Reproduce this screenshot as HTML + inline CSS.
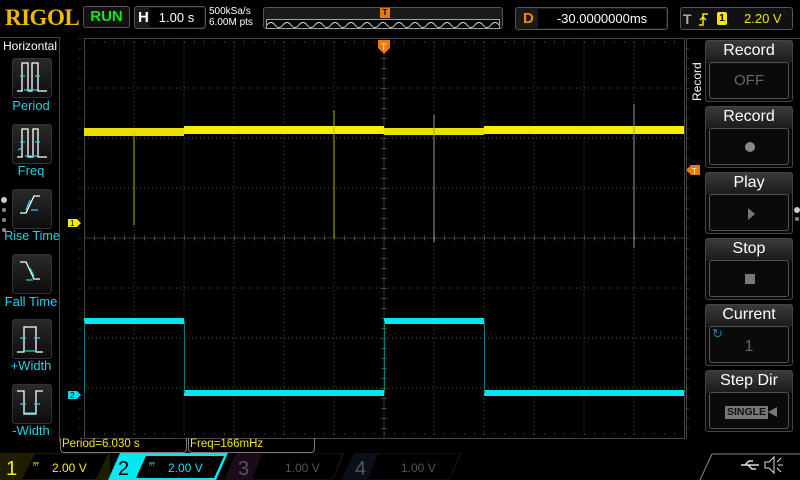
<!DOCTYPE html>
<html><head><meta charset="utf-8"><style>
*{margin:0;padding:0;box-sizing:border-box}
body{width:800px;height:480px;background:#000;overflow:hidden;position:relative;font-family:"Liberation Sans",sans-serif;color:#fff}
.a{position:absolute}
.btn{position:absolute;left:12px;width:40px;height:40px;border:1px solid #333;border-radius:3px;background:linear-gradient(#2a2a2a,#0c0c0c)}
.lbl{position:absolute;left:0;width:62px;text-align:center;color:#1fd3e8;font-size:13px}
.rb{position:absolute;left:705px;width:88px;height:62px;border:1px solid #444;border-radius:3px;background:linear-gradient(#3a3a3a,#1a1a1a 22px,#0a0a0a 22px)}
.rb .h{position:absolute;top:1px;width:100%;text-align:center;font-size:16px;color:#fff}
.rb .b{position:absolute;left:3px;top:21px;width:80px;height:37px;border:1px solid #555;border-radius:3px;background:#0a0a0a;text-align:center;color:#666}
</style></head><body>
<div class="a" style="left:5px;top:5px;font-family:'Liberation Serif',serif;font-weight:bold;font-size:23px;color:#f0b800;letter-spacing:-0.5px">RIGOL</div>
<div class="a" style="left:83px;top:6px;width:47px;height:22px;border:1px solid #555;border-radius:3px;background:#111;color:#17e81a;font-weight:bold;font-size:15px;text-align:center;line-height:20px">RUN</div>
<div class="a" style="left:134px;top:6px;width:72px;height:23px;border:1px solid #555;border-radius:3px;background:#1a1a1a"><span class="a" style="left:3px;top:2px;font-weight:bold;font-size:15px">H</span><div class="a" style="left:14px;top:1px;width:55px;height:19px;background:#000;border-radius:2px;font-size:13px;text-align:center;line-height:19px">1.00 s</div></div>
<div class="a" style="left:209px;top:6px;font-size:10px;line-height:11px">500kSa/s<br>6.00M pts</div>
<div class="a" style="left:263px;top:7px;width:240px;height:22px;border:1px solid #555;border-radius:3px;background:#1a1a1a"></div>
<div class="a" style="left:266px;top:19px;width:234px;height:10px;border:1px solid #8aa;background:#000"></div>
<svg class="a" style="left:267px;top:20px" width="232" height="8"><path d="M0 5 Q4 0 8 5 T16 5 T24 5 T32 5 T40 5 T48 5 T56 5 T64 5 T72 5 T80 5 T88 5 T96 5 T104 5 T112 5 T120 5 T128 5 T136 5 T144 5 T152 5 T160 5 T168 5 T176 5 T184 5 T192 5 T200 5 T208 5 T216 5 T224 5 T232 5" stroke="#ddd" fill="none"/></svg>
<div class="a" style="left:380px;top:8px;width:10px;height:10px;background:#f07800;color:#000;font-size:8px;text-align:center;line-height:10px;font-weight:bold">T</div>
<div class="a" style="left:515px;top:7px;width:153px;height:23px;border:1px solid #555;border-radius:3px;background:#1a1a1a"><span class="a" style="left:7px;top:2px;color:#f08a00;font-weight:bold;font-size:15px">D</span><div class="a" style="left:22px;top:1px;width:128px;height:19px;background:#000;font-size:13px;text-align:center;line-height:19px">-30.0000000ms</div></div>
<div class="a" style="left:680px;top:7px;width:113px;height:23px;border:1px solid #555;border-radius:3px;background:#111"><span class="a" style="left:2px;top:3px;color:#aaa;font-weight:bold;font-size:14px">T</span>
<svg class="a" style="left:16px;top:4px" width="14" height="15"><path d="M2 13H6V2H11M3 8L6 5L9 8" stroke="#f5e50a" fill="none" stroke-width="1.5"/></svg>
<div class="a" style="left:36px;top:4px;width:10px;height:13px;background:#f5e50a;border-radius:2px;color:#000;font-size:10px;text-align:center;line-height:13px;font-weight:bold">1</div><span class="a" style="left:63px;top:3px;color:#f5e50a;font-size:13px">2.20 V</span></div>
<div class="a" style="left:0;top:37px;width:60px;height:405px;border-top:1px solid #444;border-right:1px solid #444"></div>
<div class="a" style="left:3px;top:39px;font-size:12px">Horizontal</div>
<div class="btn" style="top:58px"></div><div class="lbl" style="top:98px">Period</div>
<div class="btn" style="top:124px"></div><div class="lbl" style="top:163px">Freq</div>
<div class="btn" style="top:189px"></div><div class="lbl" style="top:229px;left:1px;font-size:12.5px">Rise Time</div>
<div class="btn" style="top:254px"></div><div class="lbl" style="top:294px">Fall Time</div>
<div class="btn" style="top:319px"></div><div class="lbl" style="top:358px">+Width</div>
<div class="btn" style="top:384px"></div><div class="lbl" style="top:423px">-Width</div>
<svg class="a" style="left:0;top:0" width="60" height="440" fill="none" stroke-width="1.3">
<g stroke="#fff"><path d="M17 91H22V63H28V91H32V63H38V91H47"/><path d="M17 157H22V129H28V157H33V129H38V157H47"/><path d="M20 213H26L34 196H40"/><path d="M20 262H26L34 279H40"/><path d="M17 352H24V327H36V352H43"/><path d="M17 391H24V414H36V391H43"/></g>
<g stroke="#1fd3e8"><path d="M20 76H25M35 76H40M24 90H37"/><path d="M20 142H25M35 142H40M25 156H38M18 150L23 147"/><path d="M26 210L30 200M31 210H38"/><path d="M26 280H33M34 276L30 268"/><path d="M20 338H26M34 338H40M24 351H37"/><path d="M20 404H26M34 404H40M24 413H37"/></g>
<g fill="#888" stroke="none"><circle cx="4" cy="200" r="3" fill="#ccc"/><circle cx="4" cy="210" r="2"/><circle cx="4" cy="220" r="2"/><circle cx="4" cy="230" r="2"/></g>
</svg>
<svg class="a" style="left:0;top:0" width="800" height="480">
<rect x="84.5" y="38.5" width="600" height="400" fill="none" stroke="#444"/>
<g stroke="#555" stroke-dasharray="1 3">
<path d="M134 38V438M184 38V438M234 38V438M284 38V438M334 38V438M434 38V438M484 38V438M534 38V438M584 38V438M634 38V438"/>
<path d="M84 88H684M84 138H684M84 188H684M84 288H684M84 338H684M84 388H684"/>
</g>
<g stroke="#666">
<path d="M384 38V438M84 238H684" stroke-dasharray="1 9" stroke-width="5" stroke="#555"/>
<path d="M384 38V438M84 238H684" stroke="#333"/>
</g>
<g stroke="#666" stroke-dasharray="1 9"><path d="M84 434H684M84 42H684M80 38V438M688 38V438" stroke-width="1"/></g>
<rect x="84" y="128" width="100" height="8" fill="#e8e000"/>
<rect x="184" y="126" width="200" height="8" fill="#f5ee00"/>
<rect x="384" y="128" width="100" height="7" fill="#e8e000"/>
<rect x="484" y="126" width="200" height="8" fill="#f5ee00"/>
<path d="M134 134V225M334 110V238" stroke="#b8b000"/>
<path d="M434 115V242M634 104V248" stroke="#999"/>
<path d="M84 321H184M384 321H484" stroke="#00e8f0" stroke-width="6"/>
<path d="M184 393H384M484 393H684" stroke="#00e8f0" stroke-width="6"/>
<path d="M84.5 321V393M184.5 321V393M384.5 321V393M484.5 321V393" stroke="#0a7a80"/>
<path d="M68 219h9l4 4l-4 4h-9z" fill="#f5ee00"/><text x="70" y="226" font-size="8" fill="#000" font-family="Liberation Sans">1</text>
<path d="M68 391h9l4 4l-4 4h-9z" fill="#00e0f0"/><text x="70" y="398" font-size="8" fill="#000" font-family="Liberation Sans">2</text>
<path d="M378 40h12v8l-6 6l-6-6z" fill="#f07800"/><text x="381" y="50" font-size="9" fill="#fff" font-family="Liberation Sans">T</text>
<path d="M686 170l5-5h9v10h-9z" fill="#f07800"/><text x="692" y="174" font-size="8" fill="#fff" font-family="Liberation Sans">T</text>
</svg>
<div class="a" style="left:60px;top:438px;width:127px;height:15px;border:1px solid #777;border-top:none;border-radius:0 0 4px 4px;color:#f5e50a;font-size:11.5px;padding-left:1px;line-height:13px">Period=6.030 s</div>
<div class="a" style="left:188px;top:438px;width:127px;height:15px;border:1px solid #777;border-top:none;border-radius:0 0 4px 4px;color:#f5e50a;font-size:11.5px;padding-left:1px;line-height:13px">Freq=166mHz</div>
<div class="a" style="left:686px;top:38px;width:114px;height:401px;border-left:1px solid #444;border-top:1px solid #444"></div>
<div class="a" style="transform:rotate(-90deg);transform-origin:left top;font-size:12px;white-space:nowrap;left:690px;top:101px">Record</div>
<div class="rb" style="top:40px"><div class="h">Record</div><div class="b" style="font-size:15px;line-height:36px">OFF</div></div>
<div class="rb" style="top:106px"><div class="h">Record</div><div class="b"><div class="a" style="left:35px;top:13px;width:10px;height:10px;border-radius:50%;background:#888"></div></div></div>
<div class="rb" style="top:172px"><div class="h">Play</div><div class="b"><div class="a" style="left:38px;top:13px;border-left:7px solid #777;border-top:6px solid transparent;border-bottom:6px solid transparent"></div></div></div>
<div class="rb" style="top:238px"><div class="h">Stop</div><div class="b"><div class="a" style="left:35px;top:13px;width:10px;height:10px;background:#777"></div></div></div>
<div class="rb" style="top:304px"><div class="h">Current</div><div class="b" style="font-size:16px;line-height:40px">1<span class="a" style="left:2px;top:-13px;color:#1a7fa0;font-size:13px">↻</span></div></div>
<div class="rb" style="top:370px"><div class="h">Step Dir</div><div class="b"><div class="a" style="left:15px;top:13px;width:43px;height:13px;background:#777;color:#111;font-size:10.5px;font-weight:bold;line-height:13px">SINGLE</div><div class="a" style="left:58px;top:14px;border-right:9px solid #777;border-top:5px solid transparent;border-bottom:5px solid transparent"></div></div></div>
<div class="a" style="left:794px;top:207px;width:6px;height:6px;border-radius:50%;background:#ccc"></div>
<div class="a" style="left:795px;top:217px;width:4px;height:4px;border-radius:50%;background:#888"></div>
<svg class="a" style="left:0;top:453px" width="800" height="27" font-family="Liberation Sans">
<rect x="0" y="0" width="110" height="27" fill="#1d1d00"/>
<path d="M35 1H108L96 26H22z" fill="#000"/>
<text x="6" y="22" font-size="20" fill="#f5ee00">1</text>
<path d="M33 10h6M33 12h1M35 12h1M37 12h1" stroke="#f5ee00"/>
<text x="52" y="19" font-size="12" fill="#f5ee00">2.00 V</text>
<path d="M120 0H228L216 27H108z" fill="#00e8f0"/>
<path d="M146 3H224L214 25H136z" fill="#000"/>
<text x="118" y="22" font-size="20" fill="#000">2</text>
<path d="M149 10h6M149 12h1M151 12h1M153 12h1" stroke="#00e8f0"/>
<text x="168" y="19" font-size="12" fill="#00e8f0">2.00 V</text>
<path d="M236 0H345L333 27H224z" fill="#1a0a1a"/>
<path d="M262 1H342L332 26H252z" fill="#000"/>
<text x="238" y="22" font-size="20" fill="#555">3</text>
<text x="285" y="19" font-size="12" fill="#555">1.00 V</text>
<path d="M354 0H462L450 27H341z" fill="#0a1018"/>
<path d="M378 1H459L449 26H368z" fill="#000"/>
<text x="355" y="22" font-size="20" fill="#555">4</text>
<text x="401" y="19" font-size="12" fill="#555">1.00 V</text>
<path d="M700 27L712 1H800" stroke="#888" fill="none"/>
<path d="M741 12h18M745 12l4-4h4M748 12l4 4h4" stroke="#ddd" fill="none" stroke-width="1.5"/>
<path d="M765 9h4l5-5v16l-5-5h-4z" stroke="#ddd" fill="none"/>
<path d="M777 9l4-4M778 12h5M777 15l4 4" stroke="#ddd"/>
</svg>
</body></html>
